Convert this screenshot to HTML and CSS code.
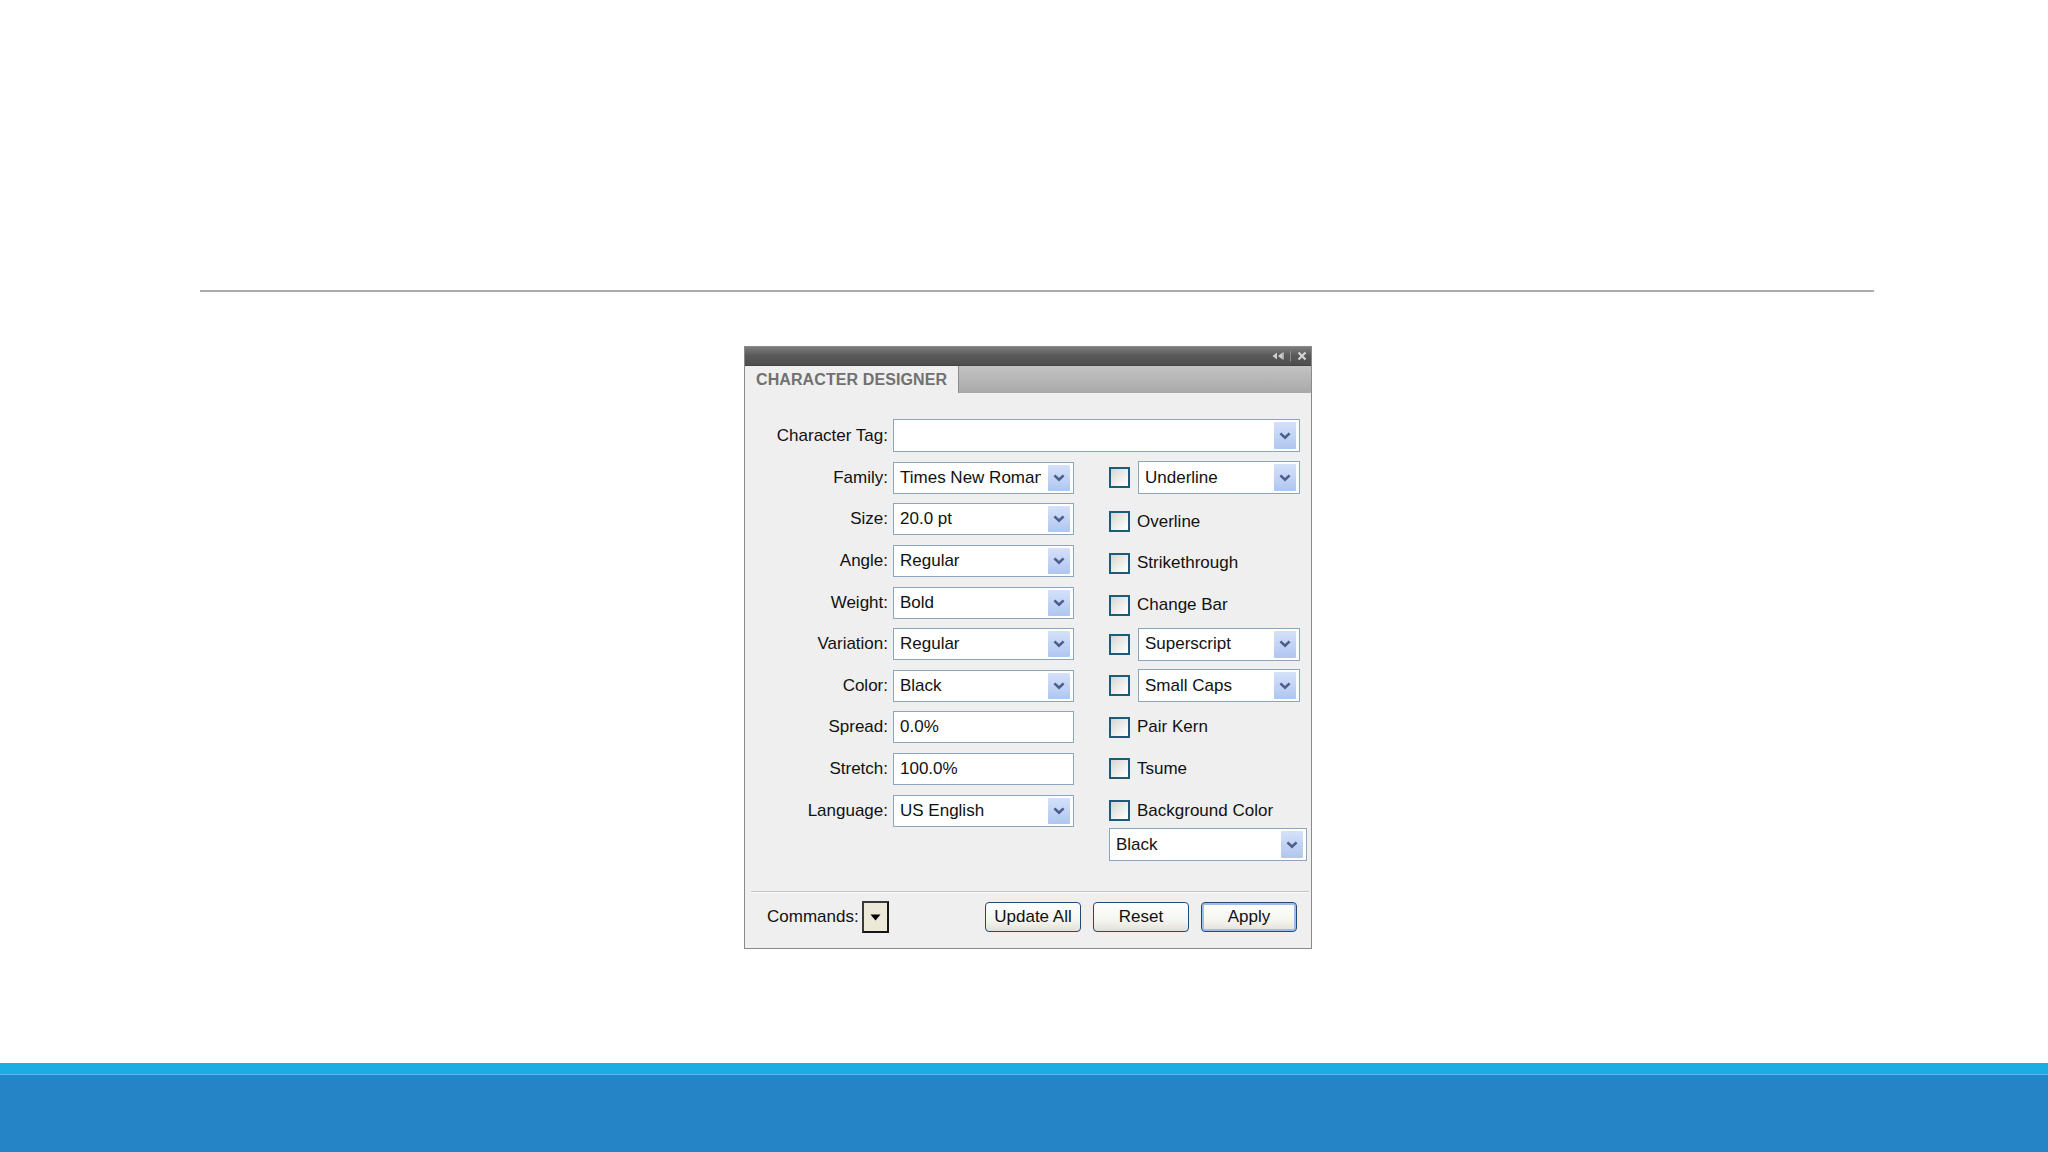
FILE: index.html
```html
<!DOCTYPE html>
<html lang="en">
<head>
<meta charset="utf-8">
<title>Character Designer</title>
<link rel="stylesheet" href="styles.css">
</head>
<body>
<div class="slide">
  <div class="rule"></div>
  <div class="panel">
    <div class="titlebar">
      <svg class="tb-icons" width="36" height="12" viewBox="0 0 36 12">
        <polygon points="1.5,6 6,2.5 6,9.5" fill="#cfcfcf"/>
        <polygon points="7,6 11.5,2.5 11.5,9.5" fill="#cfcfcf"/>
        <rect x="11.5" y="2.5" width="1.2" height="7" fill="#cfcfcf"/>
        <rect x="19" y="0.5" width="1" height="11" fill="#8a8a8a"/>
        <path d="M27.5 2.5 L34.5 9.5 M34.5 2.5 L27.5 9.5" stroke="#d4d4d4" stroke-width="2.2" fill="none"/>
      </svg>
    </div>
    <div class="tabbar"><div class="tab">CHARACTER DESIGNER</div></div>
    <div class="content">
      <div class="row row-tag">
        <span class="lbl">Character Tag:</span>
        <div class="combo combo-tag"><span class="val"></span><span class="arrow"><svg width="12" height="8" viewBox="0 0 12 8"><path d="M1.4 1.4 L6 5.8 L10.6 1.4" stroke="#4a5f8c" stroke-width="2.6" fill="none"/></svg></span></div>
      </div>

      <div class="row">
        <div class="lcell"><span class="lbl">Family:</span><div class="combo"><span class="val val-clip">Times New Roman</span><span class="arrow"><svg width="12" height="8" viewBox="0 0 12 8"><path d="M1.4 1.4 L6 5.8 L10.6 1.4" stroke="#4a5f8c" stroke-width="2.6" fill="none"/></svg></span></div></div>
        <div class="rcell"><span class="chk"></span><div class="combo combo-r"><span class="val">Underline</span><span class="arrow"><svg width="12" height="8" viewBox="0 0 12 8"><path d="M1.4 1.4 L6 5.8 L10.6 1.4" stroke="#4a5f8c" stroke-width="2.6" fill="none"/></svg></span></div></div>
      </div>

      <div class="row">
        <div class="lcell"><span class="lbl">Size:</span><div class="combo"><span class="val">20.0 pt</span><span class="arrow"><svg width="12" height="8" viewBox="0 0 12 8"><path d="M1.4 1.4 L6 5.8 L10.6 1.4" stroke="#4a5f8c" stroke-width="2.6" fill="none"/></svg></span></div></div>
        <div class="rcell rdown"><span class="chk"></span><span class="rlbl">Overline</span></div>
      </div>

      <div class="row">
        <div class="lcell"><span class="lbl">Angle:</span><div class="combo"><span class="val">Regular</span><span class="arrow"><svg width="12" height="8" viewBox="0 0 12 8"><path d="M1.4 1.4 L6 5.8 L10.6 1.4" stroke="#4a5f8c" stroke-width="2.6" fill="none"/></svg></span></div></div>
        <div class="rcell rdown"><span class="chk"></span><span class="rlbl">Strikethrough</span></div>
      </div>

      <div class="row">
        <div class="lcell"><span class="lbl">Weight:</span><div class="combo"><span class="val">Bold</span><span class="arrow"><svg width="12" height="8" viewBox="0 0 12 8"><path d="M1.4 1.4 L6 5.8 L10.6 1.4" stroke="#4a5f8c" stroke-width="2.6" fill="none"/></svg></span></div></div>
        <div class="rcell rdown"><span class="chk"></span><span class="rlbl">Change Bar</span></div>
      </div>

      <div class="row">
        <div class="lcell"><span class="lbl">Variation:</span><div class="combo"><span class="val">Regular</span><span class="arrow"><svg width="12" height="8" viewBox="0 0 12 8"><path d="M1.4 1.4 L6 5.8 L10.6 1.4" stroke="#4a5f8c" stroke-width="2.6" fill="none"/></svg></span></div></div>
        <div class="rcell"><span class="chk"></span><div class="combo combo-r"><span class="val">Superscript</span><span class="arrow"><svg width="12" height="8" viewBox="0 0 12 8"><path d="M1.4 1.4 L6 5.8 L10.6 1.4" stroke="#4a5f8c" stroke-width="2.6" fill="none"/></svg></span></div></div>
      </div>

      <div class="row">
        <div class="lcell"><span class="lbl">Color:</span><div class="combo"><span class="val">Black</span><span class="arrow"><svg width="12" height="8" viewBox="0 0 12 8"><path d="M1.4 1.4 L6 5.8 L10.6 1.4" stroke="#4a5f8c" stroke-width="2.6" fill="none"/></svg></span></div></div>
        <div class="rcell"><span class="chk"></span><div class="combo combo-r"><span class="val">Small Caps</span><span class="arrow"><svg width="12" height="8" viewBox="0 0 12 8"><path d="M1.4 1.4 L6 5.8 L10.6 1.4" stroke="#4a5f8c" stroke-width="2.6" fill="none"/></svg></span></div></div>
      </div>

      <div class="row">
        <div class="lcell"><span class="lbl">Spread:</span><div class="combo text"><span class="val">0.0%</span></div></div>
        <div class="rcell"><span class="chk"></span><span class="rlbl">Pair Kern</span></div>
      </div>

      <div class="row">
        <div class="lcell"><span class="lbl">Stretch:</span><div class="combo text"><span class="val">100.0%</span></div></div>
        <div class="rcell"><span class="chk"></span><span class="rlbl">Tsume</span></div>
      </div>

      <div class="row">
        <div class="lcell"><span class="lbl">Language:</span><div class="combo"><span class="val">US English</span><span class="arrow"><svg width="12" height="8" viewBox="0 0 12 8"><path d="M1.4 1.4 L6 5.8 L10.6 1.4" stroke="#4a5f8c" stroke-width="2.6" fill="none"/></svg></span></div></div>
        <div class="rcell"><span class="chk"></span><span class="rlbl">Background Color</span></div>
      </div>

      <div class="row-extra">
        <div class="combo combo-bg"><span class="val">Black</span><span class="arrow"><svg width="12" height="8" viewBox="0 0 12 8"><path d="M1.4 1.4 L6 5.8 L10.6 1.4" stroke="#4a5f8c" stroke-width="2.6" fill="none"/></svg></span></div>
      </div>

      <div class="sep"></div>

      <div class="footer">
        <span class="cmdlbl">Commands:</span>
        <span class="cmdbtn"><svg width="11" height="7" viewBox="0 0 11 7"><polygon points="0.5,0.5 10.5,0.5 5.5,6.5" fill="#000"/></svg></span>
        <div class="btns">
          <button class="btn">Update All</button>
          <button class="btn">Reset</button>
          <button class="btn btn-default">Apply</button>
        </div>
      </div>
    </div>
  </div>
  <div class="spacer"></div>
  <div class="band-light"></div>
  <div class="band-dark"></div>
</div>
</body>
</html>
```

FILE: styles.css
```css
html, body {
  margin: 0;
  padding: 0;
  background: #ffffff;
}

body {
  font-family: "Liberation Sans", Arial, sans-serif;
  color: #111;
}

.slide {
  width: 2048px;
  height: 1152px;
  display: flex;
  flex-direction: column;
  overflow: hidden;
}

.rule {
  height: 2px;
  background: #acacac;
  margin: 290px 174px 0 200px;
  flex: none;
}

.panel {
  flex: none;
  margin: 54px 0 0 744px;
  width: 568px;
  box-sizing: border-box;
  border: 1px solid #8a8a8a;
  background: #efefef;
}

.titlebar {
  height: 18px;
  background: linear-gradient(#7d7d7d, #5a5a5a 45%, #4e4e4e);
  display: flex;
  justify-content: flex-end;
  align-items: center;
  padding-right: 4px;
}

.tb-icons {
  display: block;
}

.tabbar {
  height: 28px;
  display: flex;
  background: linear-gradient(#c3c3c3, #a9a9a9);
  border-top: 1px solid #444;
  box-sizing: border-box;
}

.tab {
  width: 214px;
  box-sizing: border-box;
  background: #efefef;
  border-right: 1px solid #8c8c8c;
  padding-left: 11px;
  display: flex;
  align-items: center;
  font-size: 16px;
  font-weight: bold;
  color: #717171;
  letter-spacing: 0.1px;
}

.content {
  padding-top: 21px;
}

.row {
  display: flex;
  align-items: center;
  height: 41.6px;
}

.row-tag {
  height: 43px;
}

.lbl {
  flex: none;
  width: 143px;
  text-align: right;
  font-size: 17px;
  white-space: nowrap;
}

.lcell {
  flex: none;
  width: 329px;
  display: flex;
  align-items: center;
}

.rcell {
  display: flex;
  align-items: center;
  margin-left: 35px;
}

.rdown {
  margin-top: 5px;
}

.combo {
  flex: none;
  margin-left: 5px;
  width: 181px;
  height: 32px;
  box-sizing: border-box;
  border: 1px solid #8ca6c0;
  background: #fff;
  display: flex;
  align-items: center;
}

.combo-tag {
  width: 407px;
  height: 33px;
}

.combo-r {
  margin-left: 8px;
  width: 162px;
  height: 33px;
}

.val {
  flex: 1;
  min-width: 0;
  padding-left: 6px;
  margin-right: 3px;
  font-size: 17px;
  white-space: nowrap;
  overflow: hidden;
}

.val-clip {
  margin-right: 7px;
}

.arrow {
  flex: none;
  width: 22px;
  height: calc(100% - 4px);
  margin-right: 3px;
  background: linear-gradient(#d5e1fa, #b0c6f0);
  border-radius: 1px;
  display: flex;
  align-items: center;
  justify-content: center;
}

.arrow svg {
  display: block;
}

.chk {
  flex: none;
  width: 21px;
  height: 21px;
  box-sizing: border-box;
  border: 2px solid #1e5b79;
  background: linear-gradient(135deg, #d6d6d0, #fbfbfb 85%);
}

.rlbl {
  margin-left: 7px;
  font-size: 17px;
  white-space: nowrap;
}

.row-extra {
  height: 33px;
  margin-top: -3px;
  padding-left: 364px;
  display: flex;
}

.combo-bg {
  margin-left: 0;
  width: 198px;
  height: 33px;
}

.sep {
  margin: 30px 2px 0 6px;
  height: 1px;
  background: #c3c3c3;
  border-bottom: 1px solid #fafafa;
}

.footer {
  height: 55px;
  box-sizing: border-box;
  padding: 8px 14px 15px 22px;
  display: flex;
  align-items: center;
}

.cmdlbl {
  font-size: 17px;
}

.cmdbtn {
  margin-left: 3px;
  width: 27px;
  height: 32px;
  box-sizing: border-box;
  border: 2px solid #151515;
  border-top-color: #3a3a3a;
  border-left-color: #3a3a3a;
  background: #ece9d8;
  display: flex;
  align-items: center;
  justify-content: center;
}

.cmdbtn svg {
  display: block;
}

.btns {
  margin-left: auto;
  display: flex;
  gap: 12px;
}

.btn {
  width: 96px;
  height: 30px;
  box-sizing: border-box;
  border: 1px solid #1f4a78;
  border-radius: 4px;
  background: linear-gradient(#ffffff, #f4f4ef 65%, #e2dfd5);
  font-family: "Liberation Sans", Arial, sans-serif;
  font-size: 17px;
  color: #111;
  padding: 0;
  display: flex;
  align-items: center;
  justify-content: center;
}

.btn-default {
  box-shadow: inset 0 0 0 2px #9cbdee;
}

.spacer {
  flex: 1;
}

.band-light {
  flex: none;
  height: 11px;
  background: #1aade3;
}

.band-dark {
  flex: none;
  height: 78px;
  background: #2584c6;
  box-sizing: border-box;
  border-top: 1px solid #62b8ea;
}
```
